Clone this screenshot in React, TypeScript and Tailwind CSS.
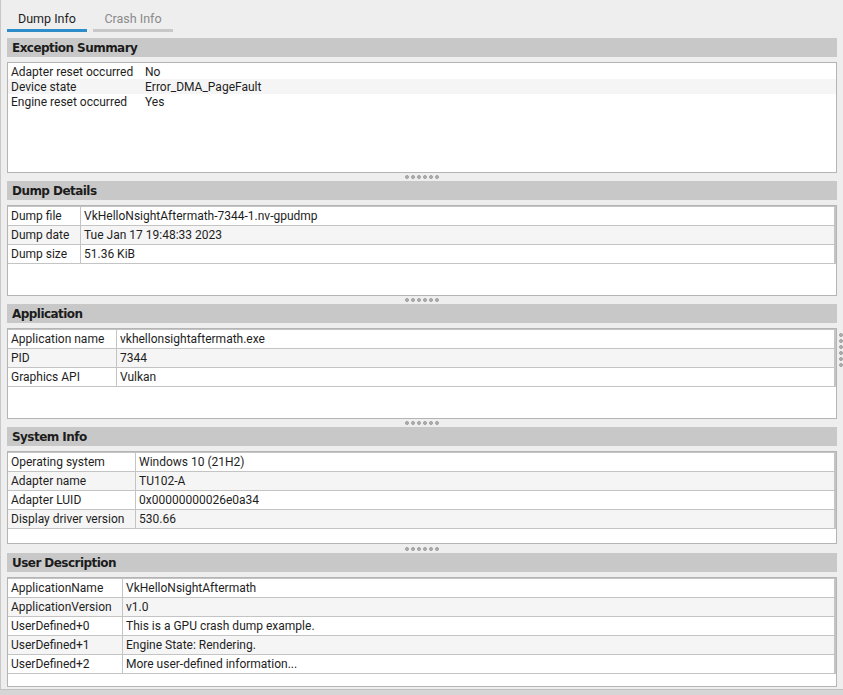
import React from "react";

type Row = [string, string];

function HDots() {
  return (
    <div className="flex items-center justify-center gap-[2px]">
      {[0, 1, 2, 3, 4, 5].map((i) => (
        <div key={i} className="w-[4px] h-[4px] rounded-full bg-[#b0b0b0] border border-[#a0a0a0]" />
      ))}
    </div>
  );
}

function Splitter({ h }: { h: string }) {
  return (
    <div className={`${h} flex items-center justify-center`}>
      <HDots />
    </div>
  );
}

function Header({ title }: { title: string }) {
  return (
    <div className="h-[19px] bg-[#c8c8c8] flex items-center pl-[5px] font-['DejaVu_Sans',sans-serif] font-bold text-[12px] text-[#1c1c1c] tracking-[-0.55px]">
      {title}
    </div>
  );
}

function GridTable({ rows, col, boxH }: { rows: Row[]; col: string; boxH: string }) {
  return (
    <div className={`${boxH} border border-[#b4b4b4] bg-white`}>
      <div className="border-t border-r-2 border-[#c4c4c4]">
        {rows.map(([k, v], i) => (
          <div
            key={k}
            className={`flex h-[19px] border-b border-[#c4c4c4] ${i % 2 === 1 ? "bg-[#f5f5f5]" : "bg-white"}`}
          >
            <div className={`${col} shrink-0 border-r border-[#c4c4c4] pl-[3px] flex items-center`}>{k}</div>
            <div className="pl-[3px] flex items-center">{v}</div>
          </div>
        ))}
      </div>
    </div>
  );
}

export default function App() {
  const exc: Row[] = [
    ["Adapter reset occurred", "No"],
    ["Device state", "Error_DMA_PageFault"],
    ["Engine reset occurred", "Yes"],
  ];
  const dump: Row[] = [
    ["Dump file", "VkHelloNsightAftermath-7344-1.nv-gpudmp"],
    ["Dump date", "Tue Jan 17 19:48:33 2023"],
    ["Dump size", "51.36 KiB"],
  ];
  const app: Row[] = [
    ["Application name", "vkhellonsightaftermath.exe"],
    ["PID", "7344"],
    ["Graphics API", "Vulkan"],
  ];
  const sys: Row[] = [
    ["Operating system", "Windows 10 (21H2)"],
    ["Adapter name", "TU102-A"],
    ["Adapter LUID", "0x00000000026e0a34"],
    ["Display driver version", "530.66"],
  ];
  const user: Row[] = [
    ["ApplicationName", "VkHelloNsightAftermath"],
    ["ApplicationVersion", "v1.0"],
    ["UserDefined+0", "This is a GPU crash dump example."],
    ["UserDefined+1", "Engine State: Rendering."],
    ["UserDefined+2", "More user-defined information..."],
  ];

  return (
    <div className="w-[843px] h-[695px] bg-[#eeeeee] overflow-hidden font-['Roboto',sans-serif] text-[12px] text-[#1e1e1e] flex flex-col relative">
      <div className="flex-1 flex flex-col border-l border-[#c8c8c8]">
        {/* tabs */}
        <div className="h-[32px] flex gap-[6px] pl-[6px] shrink-0">
          <div className="w-[80px] flex flex-col">
            <div className="flex-1 flex items-center justify-center pt-[9px] text-[12.5px] text-[#1e1e1e]">Dump Info</div>
            <div className="h-[3px] bg-[#2e8ccb]" />
          </div>
          <div className="w-[80px] flex flex-col">
            <div className="flex-1 flex items-center justify-center pt-[9px] text-[12.5px] text-[#8a8a8a]">Crash Info</div>
            <div className="h-[3px] bg-[#c8c8c8]" />
          </div>
        </div>

        <div className="mt-[6px] pl-[6px] w-[836px] flex flex-col">
          <Header title="Exception Summary" />
          <div className="h-[5px]" />
          <div className="h-[111px] border border-[#b4b4b4] bg-white pt-[1px]">
            {exc.map(([k, v], i) => (
              <div key={k} className={`flex h-[15px] items-center ${i % 2 === 1 ? "bg-[#f5f5f5]" : ""}`}>
                <div className="w-[137px] pl-[3px] shrink-0">{k}</div>
                <div>{v}</div>
              </div>
            ))}
          </div>
          <Splitter h="h-[8px]" />

          <Header title="Dump Details" />
          <div className="h-[5px]" />
          <GridTable rows={dump} col="w-[73px]" boxH="h-[91px]" />
          <Splitter h="h-[8px]" />

          <Header title="Application" />
          <div className="h-[5px]" />
          <GridTable rows={app} col="w-[109px]" boxH="h-[91px]" />
          <Splitter h="h-[8px]" />

          <Header title="System Info" />
          <div className="h-[5px]" />
          <GridTable rows={sys} col="w-[128px]" boxH="h-[93px]" />
          <Splitter h="h-[9px]" />

          <Header title="User Description" />
          <div className="h-[5px]" />
          <GridTable rows={user} col="w-[115px]" boxH="h-[110px]" />
        </div>
        <div className="flex-1" />
      </div>
      <div className="h-[6px] bg-[#d6d6d6] border-t border-[#c2c2c2] shrink-0" />

      {/* vertical splitter dots at right */}
      <div className="absolute left-[839px] top-[333px] flex flex-col gap-[2px]">
        {[0, 1, 2, 3, 4, 5].map((i) => (
          <div key={i} className="w-[4px] h-[4px] rounded-full bg-[#b0b0b0] border border-[#a0a0a0]" />
        ))}
      </div>
    </div>
  );
}
